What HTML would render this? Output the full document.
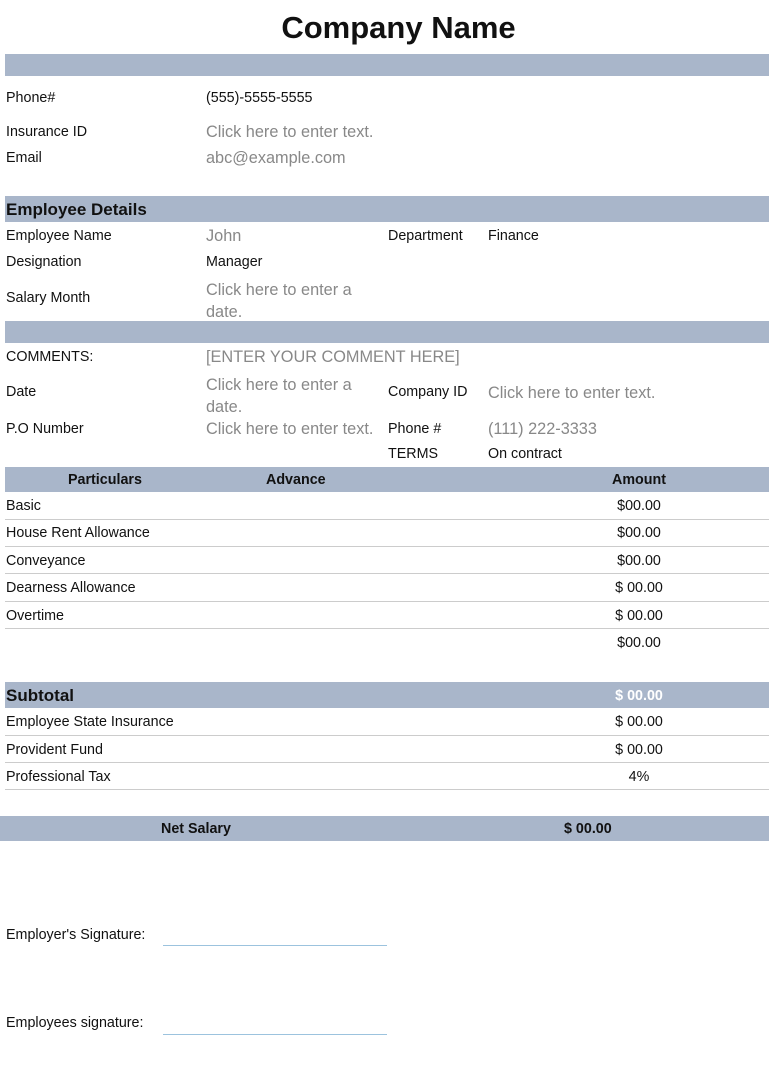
<!DOCTYPE html>
<html><head><style>
body{margin:0;width:769px;height:1074px;background:#fff;position:relative;font-family:"Liberation Sans",sans-serif;font-size:14.3px;color:#111;overflow:hidden}
div{position:absolute;white-space:nowrap;line-height:16px}
.bar{background:#a9b6ca;left:5px;right:0}
.g{color:#888;font-size:16.3px!important}
.ln{height:1px;background:#ccc;left:5px;right:0}
.b{font-weight:bold}
.r{width:120px;text-align:center;left:579px}
</style></head><body>
<div style="left:0;width:797px;text-align:center;top:10px;font-size:31px;line-height:36px;font-weight:bold">Company Name</div>
<div class="bar" style="top:54px;height:22px"></div>
<div style="left:6px;top:90px">Phone#</div><div style="left:206px;top:90px">(555)-5555-5555</div>
<div style="left:6px;top:124px">Insurance ID</div><div class="g" style="left:206px;top:124px">Click here to enter text.</div>
<div style="left:6px;top:150px">Email</div><div class="g" style="left:206px;top:150px">abc@example.com</div>
<div class="bar" style="top:196px;height:26px"></div>
<div class="b" style="left:6px;top:201px;font-size:17px;line-height:18px">Employee Details</div>
<div style="left:6px;top:228px">Employee Name</div><div class="g" style="left:206px;top:228px">John</div>
<div style="left:388px;top:228px">Department</div><div style="left:488px;top:228px">Finance</div>
<div style="left:6px;top:254px">Designation</div><div style="left:206px;top:254px">Manager</div>
<div style="left:6px;top:290px">Salary Month</div><div class="g" style="left:206px;top:279px;line-height:22px">Click here to enter a<br>date.</div>
<div class="bar" style="top:321px;height:22px"></div>
<div style="left:6px;top:349px">COMMENTS:</div><div class="g" style="left:206px;top:349px">[ENTER YOUR COMMENT HERE]</div>
<div style="left:6px;top:384px">Date</div><div class="g" style="left:206px;top:374px;line-height:22px">Click here to enter a<br>date.</div>
<div style="left:388px;top:384px">Company ID</div><div class="g" style="left:488px;top:385px">Click here to enter text.</div>
<div style="left:6px;top:421px">P.O Number</div><div class="g" style="left:206px;top:421px">Click here to enter text.</div>
<div style="left:388px;top:421px">Phone #</div><div class="g" style="left:488px;top:421px">(111) 222-3333</div>
<div style="left:388px;top:446px">TERMS</div><div style="left:488px;top:446px">On contract</div>
<div class="bar" style="top:467px;height:25px"></div>
<div class="b" style="left:68px;top:472px">Particulars</div><div class="b" style="left:266px;top:472px">Advance</div><div class="b r" style="top:472px">Amount</div>
<div style="left:6px;top:498px">Basic</div><div class="r" style="top:498px">$00.00</div>
<div class="ln" style="top:519px"></div>
<div style="left:6px;top:525px">House Rent Allowance</div><div class="r" style="top:525px">$00.00</div>
<div class="ln" style="top:546px"></div>
<div style="left:6px;top:553px">Conveyance</div><div class="r" style="top:553px">$00.00</div>
<div class="ln" style="top:573px"></div>
<div style="left:6px;top:580px">Dearness Allowance</div><div class="r" style="top:580px">$ 00.00</div>
<div class="ln" style="top:601px"></div>
<div style="left:6px;top:608px">Overtime</div><div class="r" style="top:608px">$ 00.00</div>
<div class="ln" style="top:628px"></div>
<div class="r" style="top:635px">$00.00</div>
<div class="bar" style="top:682px;height:26px"></div>
<div class="b" style="left:6px;top:687px;font-size:17px;line-height:18px">Subtotal</div><div class="b r" style="top:688px;color:#fff">$ 00.00</div>
<div style="left:6px;top:714px">Employee State Insurance</div><div class="r" style="top:714px">$ 00.00</div>
<div class="ln" style="top:735px"></div>
<div style="left:6px;top:742px">Provident Fund</div><div class="r" style="top:742px">$ 00.00</div>
<div class="ln" style="top:762px"></div>
<div style="left:6px;top:769px">Professional Tax</div><div class="r" style="top:769px">4%</div>
<div class="ln" style="top:789px"></div>
<div class="bar" style="top:816px;height:25px;left:0"></div>
<div class="b" style="left:161px;top:821px">Net Salary</div><div class="b" style="left:564px;top:821px">$ 00.00</div>
<div style="left:6px;top:927px">Employer's Signature:</div><div style="left:163px;width:224px;top:945px;height:1px;background:#9cc3de"></div>
<div style="left:6px;top:1015px">Employees signature:</div><div style="left:163px;width:224px;top:1034px;height:1px;background:#9cc3de"></div>
</body></html>
